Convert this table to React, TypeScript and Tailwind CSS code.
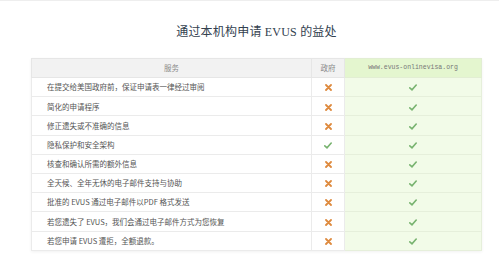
import React from "react";

const rows: { text: string; gov: boolean }[] = [
  { text: "在提交给美国政府前，保证申请表一律经过审阅", gov: false },
  { text: "简化的申请程序", gov: false },
  { text: "修正遗失或不准确的信息", gov: false },
  { text: "隐私保护和安全架构", gov: true },
  { text: "核查和确认所需的额外信息", gov: false },
  { text: "全天候、全年无休的电子邮件支持与协助", gov: false },
  { text: "批准的 EVUS 通过电子邮件以PDF 格式发送", gov: false },
  { text: "若您遗失了 EVUS，我们会通过电子邮件方式为您恢复", gov: false },
  { text: "若您申请 EVUS 遭拒，全额退款。", gov: false },
];

const Check: React.FC = () => (
  <svg width="8" height="7" viewBox="0 0 8 7" className="inline-block">
    <path d="M0.8 3.8 L3 5.8 L7.2 1" fill="none" stroke="#78b36f" strokeWidth="1.6" strokeLinecap="round" />
  </svg>
);

const Cross: React.FC = () => (
  <svg width="7" height="7" viewBox="0 0 7 7" className="inline-block">
    <path d="M1 1 L6 6 M6 1 L1 6" fill="none" stroke="#de8a3e" strokeWidth="1.8" strokeLinecap="round" />
  </svg>
);

const App: React.FC = () => {
  return (
    <div
      className="h-[264px] w-[499px] overflow-hidden border-t border-[#eeeeee] bg-white"
      style={{ fontFamily: '"Noto Sans CJK SC", "DejaVu Sans", sans-serif' }}
    >
      {/* Title */}
      <h1
        className="mt-[21px] pl-[14px] text-center text-[12px] leading-[20px] tracking-[0.2px] text-[#33414f]"
        style={{ fontFamily: '"Liberation Serif", "Noto Sans CJK SC", serif' }}
      >
        通过本机构申请 EVUS 的益处
      </h1>
      {/* Table */}
      <div className="mt-[16px] flex pl-[31px]">
        <table className="w-[450px] table-fixed border-collapse text-[7.5px] text-[#555555] shadow-[0_1px_3px_rgba(0,0,0,0.06)]">
          <colgroup>
            <col className="w-[280px]" />
            <col className="w-[33px]" />
            <col className="w-[137px]" />
          </colgroup>
          <thead>
            <tr className="h-[19px]">
              <th className="border border-[#e6e6e6] bg-[#f2f2f2] text-center font-normal text-[#8a8a8a]">
                服务
              </th>
              <th className="border border-[#e6e6e6] bg-[#f2f2f2] text-center font-normal text-[#8a8a8a]">
                政府
              </th>
              <th
                className="border border-[#e2eed3] bg-[#e4f6cf] text-center text-[6.5px] font-normal text-[#777777]"
                style={{ fontFamily: '"Liberation Mono", monospace' }}
              >
                www.evus-onlinevisa.org
              </th>
            </tr>
          </thead>
          <tbody>
            {rows.map((r) => (
              <tr key={r.text} className="h-[19.2px]">
                <td className="border border-[#ebebeb] pl-[15px] leading-none">{r.text}</td>
                <td className="border border-[#ebebeb] text-center leading-none">
                  {r.gov ? <Check /> : <Cross />}
                </td>
                <td className="border border-[#e6efdb] bg-[#f2fbe8] text-center leading-none">
                  <Check />
                </td>
              </tr>
            ))}
          </tbody>
        </table>
      </div>
    </div>
  );
};

export default App;
